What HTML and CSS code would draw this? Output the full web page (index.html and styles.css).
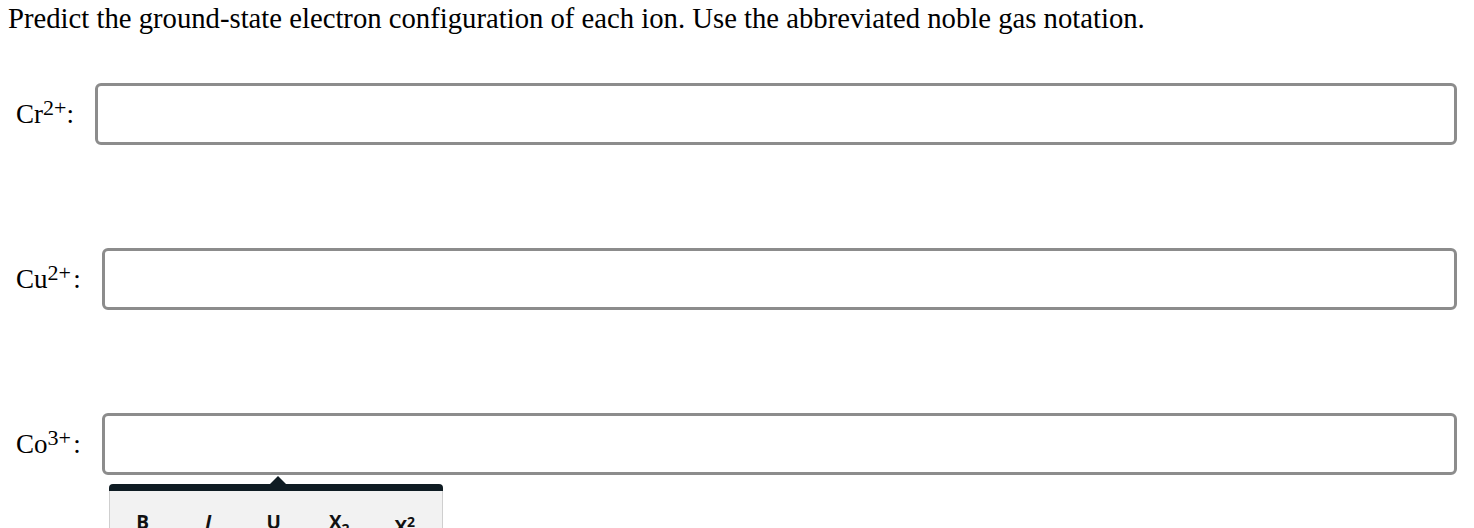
FILE: index.html
```html
<!DOCTYPE html>
<html>
<head>
<meta charset="utf-8">
<link rel="stylesheet" href="styles.css">
</head>
<body>
<p class="prompt">Predict the ground-state electron configuration of each ion. Use the abbreviated noble gas notation.</p>
<div class="row row-first">
  <span class="label">Cr<sup>2+</sup>:</span>
  <div class="box"></div>
</div>
<div class="row">
  <span class="label">Cu<sup>2+</sup>&#8202;:</span>
  <div class="box"></div>
</div>
<div class="row">
  <span class="label">Co<sup>3+</sup>&#8202;:</span>
  <div class="box"></div>
</div>
<div class="toolbar">
  <div class="toolbar-top"></div>
  <div class="toolbar-body">
    <span class="tb b">B</span>
    <span class="tb i">I</span>
    <span class="tb u">U</span>
    <span class="tb">X<sub>2</sub></span>
    <span class="tb">X<sup>2</sup></span>
  </div>
</div>
</body>
</html>
```
FILE: styles.css
```css
html, body {
  margin: 0;
  padding: 0;
  background: #ffffff;
  overflow: hidden;
}
body {
  font-family: "Liberation Serif", "Times New Roman", serif;
  color: #000;
  height: 528px;
}
.prompt {
  margin: 0;
  padding: 0 0 0 8px;
  font-size: 28.7px;
  line-height: 36px;
}
.row {
  display: flex;
  align-items: center;
  padding-left: 16px;
  padding-right: 17px;
  margin-top: 103px;
}
.row-first {
  margin-top: 47px;
}
.label {
  font-size: 27px;
  line-height: 30px;
  margin-right: 21.5px;
  white-space: nowrap;
}
.label sup {
  font-size: 22px;
  line-height: 0;
  vertical-align: 8px;
}
.box {
  flex: 1;
  height: 56px;
  border: 3px solid #8c8c8c;
  border-radius: 6px;
}
.toolbar {
  position: absolute;
  left: 109px;
  top: 484px;
  width: 334px;
}
.toolbar-top {
  position: relative;
  height: 7px;
  background: #0f1c23;
  border-radius: 4px 4px 0 0;
}
.toolbar-top::before {
  content: "";
  position: absolute;
  left: 161px;
  top: -8px;
  border-left: 8px solid transparent;
  border-right: 8px solid transparent;
  border-bottom: 8px solid #0f1c23;
}
.toolbar-body {
  display: flex;
  height: 60px;
  background: #f2f2f2;
  border-left: 1px solid #cfcfcf;
  border-right: 1px solid #cfcfcf;
}
.tb {
  width: 65.5px;
  padding-top: 18px;
  text-align: center;
  font-family: "Open Sans", "Liberation Sans", sans-serif;
  font-weight: 700;
  font-size: 19px;
  color: #111;
  line-height: 26px;
}
.tb.i { font-style: italic; }
.tb.u { text-decoration: underline; }
.tb sub, .tb sup { font-size: 14px; }
```
